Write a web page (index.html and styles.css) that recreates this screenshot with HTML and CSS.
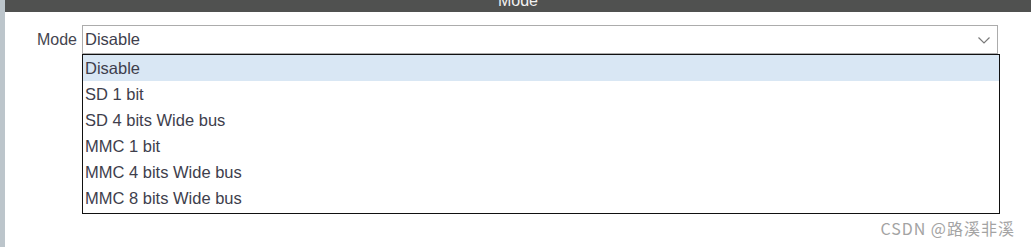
FILE: index.html
```html
<html>
<head>
<meta charset="utf-8">
<link rel="stylesheet" href="styles.css">
</head>
<body>
<div id="container">
<div class="sideStrip"></div>
<div class="panel">
	<div class="panelTitle"><span>Mode</span></div>
	<div class="formRow">
		<div class="fieldLabel">Mode</div>
		<div class="fieldBox">
			<div class="comboBox">
				<span class="comboValue">Disable</span>
				<svg class="comboArrow" width="12" height="7" viewBox="0 0 12 7"><path d="M0.5 0.5 L6 6 L11.5 0.5" fill="none" stroke="#7a7a7a" stroke-width="1.2"/></svg>
			</div>
			<div class="comboList">
				<div class="comboItem selected">Disable</div>
				<div class="comboItem">SD 1 bit</div>
				<div class="comboItem">SD 4 bits Wide bus</div>
				<div class="comboItem">MMC 1 bit</div>
				<div class="comboItem">MMC 4 bits Wide bus</div>
				<div class="comboItem">MMC 8 bits Wide bus</div>
			</div>
		</div>
	</div>
	<div class="watermark">CSDN @路溪非溪</div>
</div>
</div>
</body>
</html>
```

FILE: styles.css
```css
body
{
	margin: 0;
	background-color: #ffffff;
	overflow: hidden;
	font-family: "Liberation Sans", Arial, sans-serif;
}
#container
{
	display: flex;
	width: 1031px;
	height: 247px;
	overflow: hidden;
}
.sideStrip
{
	width: 5px;
	flex: none;
	background-color: #bcc5cb;
}
.panel
{
	flex: 1;
	display: flex;
	flex-direction: column;
}
.panelTitle
{
	height: 12px;
	overflow: hidden;
	background-color: #505150;
	color: #f0f0f0;
	text-align: center;
	font-size: 16px;
	line-height: 2px;
}
.formRow
{
	display: flex;
	align-items: flex-start;
	margin-top: 13px;
}
.fieldLabel
{
	width: 72px;
	height: 29px;
	line-height: 29px;
	text-align: right;
	padding-right: 5px;
	font-size: 16px;
	color: #45454f;
}
.fieldBox
{
	display: flex;
	flex-direction: column;
}
.comboBox
{
	width: 916px;
	height: 29px;
	box-sizing: border-box;
	border: 1px solid #acacac;
	display: flex;
	align-items: center;
	justify-content: space-between;
	padding: 0 7px 0 2px;
}
.comboValue
{
	font-size: 16.5px;
	color: #3e3e4c;
}
.comboArrow
{
	margin-top: 1px;
}
.comboList
{
	width: 918px;
	box-sizing: border-box;
	border: 1px solid #111111;
	padding-bottom: 2px;
}
.comboItem
{
	height: 26px;
	line-height: 26px;
	padding-left: 2px;
	font-size: 16.5px;
	color: #3e3e4c;
}
.comboItem.selected
{
	background-color: #d9e7f4;
}
.watermark
{
	align-self: flex-end;
	margin-top: 2px;
	margin-right: 16px;
	font-family: "Noto Sans CJK SC", sans-serif;
	font-size: 16px;
	letter-spacing: 1px;
	color: #a3a3a3;
}
```
